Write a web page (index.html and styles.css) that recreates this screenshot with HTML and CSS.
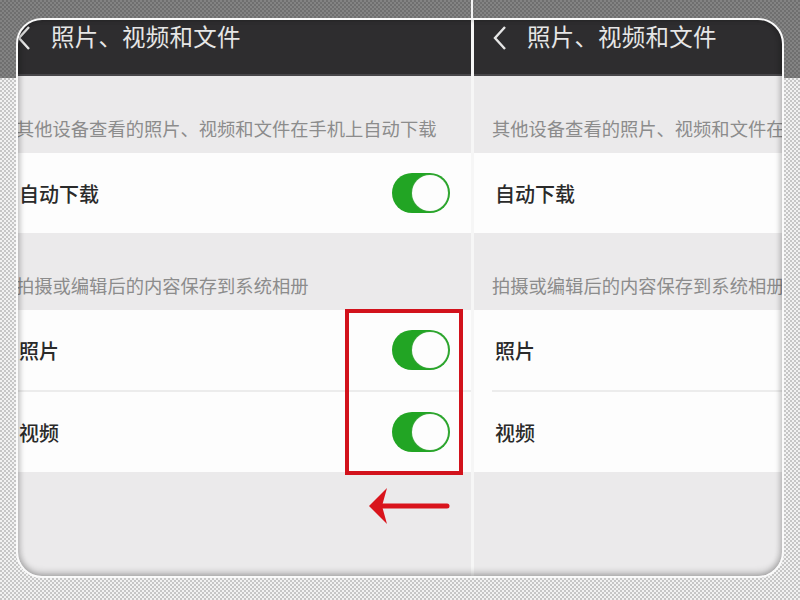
FILE: index.html
```html
<!DOCTYPE html>
<html lang="zh">
<head>
<meta charset="utf-8">
<title>照片、视频和文件</title>
<link rel="stylesheet" href="styles.css">
</head>
<body>
<div class="top-line"></div>
<div class="frame">
  <div class="panel panel-left">
    <div class="inner">
      <div class="header"><svg class="back" width="14" height="24" viewBox="0 0 14 24"><path d="M12 1 L2 12 L12 23" stroke="#e6e6e6" stroke-width="2.4" fill="none"/></svg><span class="title">照片、视频和文件</span></div>
      <div class="section-label">其他设备查看的照片、视频和文件在手机上自动下载</div>
      <div class="row"><span class="row-text">自动下载</span><span class="toggle"><span class="knob"></span></span></div>
      <div class="section-label">拍摄或编辑后的内容保存到系统相册</div>
      <div class="row"><span class="row-text">照片</span><span class="toggle"><span class="knob"></span></span></div>
      <div class="row row-divided"><span class="row-text">视频</span><span class="toggle"><span class="knob"></span></span></div>
    </div>
    <div class="highlight"></div>
    <svg class="arrow" width="84" height="40" viewBox="0 0 84 40">
      <path d="M80 20 H14" stroke="#d9141c" stroke-width="5" stroke-linecap="round" fill="none"/>
      <path d="M2 20 L20 2 L15 20 L20 38 Z" fill="#d9141c"/>
    </svg>
  </div>
  <div class="divider"></div>
  <div class="panel panel-right">
    <div class="inner">
      <div class="header"><svg class="back" width="14" height="24" viewBox="0 0 14 24"><path d="M12 1 L2 12 L12 23" stroke="#e6e6e6" stroke-width="2.4" fill="none"/></svg><span class="title">照片、视频和文件</span></div>
      <div class="section-label">其他设备查看的照片、视频和文件在手机上自动下载</div>
      <div class="row"><span class="row-text">自动下载</span></div>
      <div class="section-label">拍摄或编辑后的内容保存到系统相册</div>
      <div class="row"><span class="row-text">照片</span></div>
      <div class="row row-divided"><span class="row-text">视频</span></div>
    </div>
  </div>
</div>
</body>
</html>
```

FILE: styles.css
```css
* { box-sizing: border-box; }
html, body { margin: 0; padding: 0; }
body {
  width: 800px;
  height: 600px;
  overflow: hidden;
  position: relative;
  font-family: "Noto Sans CJK SC", "Noto Sans", sans-serif;
  background:
    linear-gradient(rgba(40,40,40,0.55), rgba(40,40,40,0.55)) 0 0 / 100% 78px no-repeat,
    repeating-conic-gradient(#c6c6c6 0 25%, #f2f2f2 0 50%) 0 0 / 4px 4px;
  padding-top: 18px;
  padding-left: 16px;
}
.top-line {
  position: absolute;
  left: 471px;
  top: 0;
  width: 2px;
  height: 20px;
  background: #f4f4f4;
}
.frame {
  position: relative;
  width: 768px;
  height: 560px;
  border: 2px solid #fafafa;
  border-radius: 26px;
  overflow: hidden;
  display: flex;
  background: #ebeaeb;
}
.frame::after {
  content: "";
  position: absolute;
  inset: 0;
  border-radius: 24px;
  box-shadow: inset 0 -4px 6px rgba(0,0,0,0.18), inset 3px 0 5px rgba(0,0,0,0.12), inset -3px 0 5px rgba(0,0,0,0.12);
  pointer-events: none;
}
.panel {
  position: relative;
  overflow: hidden;
  background: #ebeaeb;
}
.panel-left { width: 453px; }
.panel-left .inner { margin-left: -20px; width: 473px; }
.panel-right { flex: 1; }
.divider { width: 3px; background: #f6f6f6; }
.header {
  height: 56px;
  background: #2e2d2f;
  border-bottom: 2px solid #48474a;
  color: #e6e6e6;
  display: flex;
  align-items: flex-start;
  padding-left: 19px;
}
.back {
  margin-top: 6px;
  margin-right: 20px;
  flex: none;
}
.title {
  font-size: 23.5px;
  line-height: 30px;
  margin-top: 1px;
  letter-spacing: 0.2px;
}
.section-label {
  height: 77px;
  padding: 40px 0 0 18px;
  font-size: 18.3px;
  line-height: 24px;
  color: #8c8c8c;
  white-space: nowrap;
}
.row {
  height: 80px;
  background: #fdfdfd;
  display: flex;
  align-items: center;
  justify-content: space-between;
  padding: 0 21px 0 21px;
  position: relative;
}
.row-divided { height: 82px; padding-top: 2px; }
.row-divided::before {
  content: "";
  position: absolute;
  left: 18px;
  right: 0;
  top: 0;
  height: 2px;
  background: #ececec;
}
.row-text {
  font-size: 20px;
  color: #2a2a2a;
  font-weight: 500;
}
.toggle {
  width: 58px;
  height: 40px;
  border-radius: 20px;
  background: #22a524;
  display: flex;
  justify-content: flex-end;
  padding: 2px;
}
.knob {
  width: 36px;
  height: 36px;
  border-radius: 50%;
  background: #fdfdfd;
  box-shadow: 0 0 0 1px #3aa63a;
}
.highlight {
  position: absolute;
  left: 327px;
  top: 289px;
  width: 118px;
  height: 166px;
  border: 4px solid #d2121c;
}
.arrow {
  position: absolute;
  left: 349px;
  top: 466px;
}
```
